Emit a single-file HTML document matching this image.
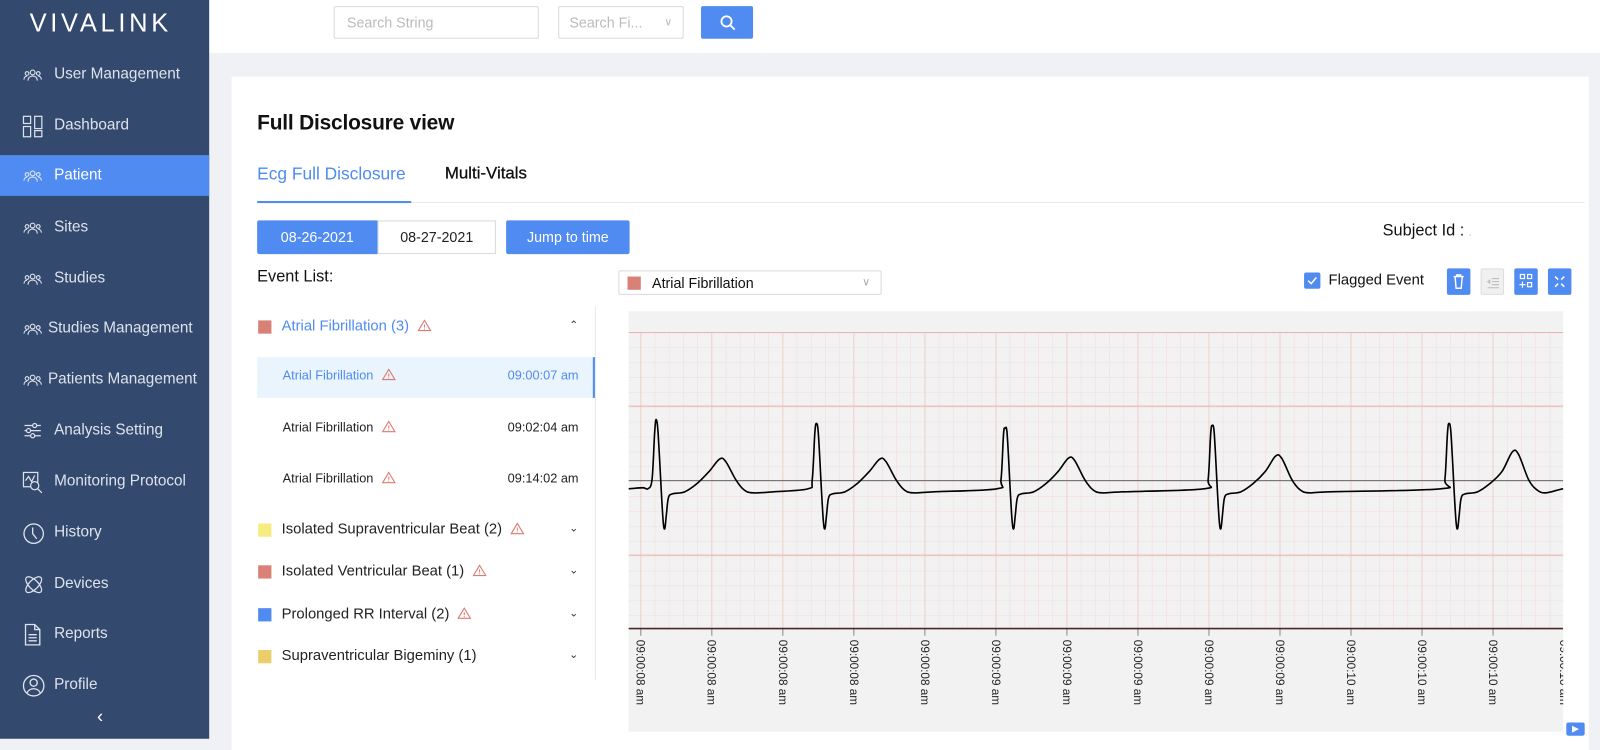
<!DOCTYPE html>
<html><head><meta charset="utf-8"><style>
*{margin:0;padding:0;box-sizing:border-box}
html,body{width:1600px;height:738px;overflow:hidden;background:#f0f1f4;font-family:"Liberation Sans",sans-serif}
#w{position:absolute;left:0;top:0;width:1568px;height:724px;transform:scale(1.0204);transform-origin:0 0}
.a{position:absolute}
#sb{left:0;top:0;width:205px;height:724px;background:#34496e}
.mi{position:absolute;left:0;width:205px;height:40px;color:#dde3ec;font-size:15px;line-height:40px;padding-left:53px}
.mi svg{position:absolute;left:22px;top:10px}
.mi.act{background:#4f8bf0;color:#fff}
.btn{position:absolute;background:#4f8bf0;color:#fff;font-size:14px;text-align:center;border-radius:2px}
.row{position:absolute;left:252px;width:331px;font-size:12.5px;color:#222}
.grp{position:absolute;left:253px;font-size:14.5px;color:#222;width:320px}
.sq{position:absolute;left:0;top:2px;width:13px;height:13px}
.warn{display:inline-block;margin-left:8px;vertical-align:-1px}
.car{position:absolute;right:0;top:0;font-size:11px;color:#333}
.tl{position:absolute;top:628px;font-size:11.5px;color:#222;writing-mode:vertical-rl;white-space:nowrap}
.ib{position:absolute;top:263px;width:23px;height:26px;border-radius:2px;background:#4f8bf0}
</style></head><body><div id="w">
<div class="a" style="left:205px;top:0;width:1363px;height:52px;background:#fff"></div>
<div class="a" style="left:327px;top:6px;width:201px;height:32px;border:1px solid #d9d9d9;border-radius:2px;color:#bbb;font-size:14px;line-height:30px;padding-left:12px">Search String</div>
<div class="a" style="left:547px;top:6px;width:123px;height:32px;border:1px solid #d9d9d9;border-radius:2px;color:#bbb;font-size:14px;line-height:30px;padding-left:10px">Search Fi... <span style="position:absolute;right:10px;font-size:11px">&#8744;</span></div>
<div class="btn" style="left:687px;top:6px;width:51px;height:32px"><svg width="16" height="16" viewBox="0 0 16 16" style="margin-top:8px"><circle cx="7" cy="7" r="5" fill="none" stroke="#fff" stroke-width="1.8"/><path d="M11 11l4 4" stroke="#fff" stroke-width="1.8"/></svg></div>

<div class="a" id="sb">
<div class="a" style="left:29px;top:9px;font-size:25px;color:#fff;letter-spacing:3.6px">VIVALINK</div>
<div id="menu"></div>
<div class="a" style="left:95px;top:692px;color:#fff;font-size:18px">&#8249;</div>
</div>

<div class="a" style="left:227px;top:75px;width:1330px;height:660px;background:#fff"></div>
<div class="a" style="left:252px;top:109px;font-size:20.5px;color:#111;font-weight:bold;letter-spacing:-0.2px">Full Disclosure view</div>
<div class="a" style="left:252px;top:161px;font-size:17px;color:#4f8bf0">Ecg Full Disclosure</div>
<div class="a" style="left:436px;top:161px;font-size:16.5px;color:#111;-webkit-text-stroke:0.3px #111">Multi-Vitals</div>
<div class="a" style="left:252px;top:198px;width:1301px;height:1px;background:#e8e8e8"></div>
<div class="a" style="left:252px;top:197px;width:151px;height:2px;background:#4f8bf0"></div>
<div class="btn" style="left:252px;top:216px;width:118px;height:33px;line-height:33px;border-radius:2px 0 0 2px">08-26-2021</div>
<div class="a" style="left:370px;top:216px;width:116px;height:33px;line-height:31px;border:1px solid #d9d9d9;font-size:14px;text-align:center;color:#222">08-27-2021</div>
<div class="btn" style="left:496px;top:216px;width:121px;height:33px;line-height:33px">Jump to time</div>
<div class="a" style="left:1355px;top:218px;font-size:16px;color:#111">Subject Id : <span style="color:#aaa;font-size:10px">.</span></div>
<div class="a" style="left:252px;top:263px;font-size:16px;color:#111">Event List:</div>

<div class="a" style="left:606px;top:265px;width:258px;height:24px;border:1px solid #d9d9d9;border-radius:2px"><div class="a" style="left:8px;top:5px;width:13px;height:13px;background:#d98077"></div><div class="a" style="left:32px;top:3px;font-size:14px;color:#111">Atrial Fibrillation</div><div class="a" style="right:10px;top:4px;font-size:11px;color:#aaa">&#8744;</div></div>
<div class="a" style="left:1278px;top:267px;width:16px;height:16px;background:#4f8bf0;border-radius:2px"><svg width="16" height="16"><path d="M4 8l3 3 5-6" fill="none" stroke="#fff" stroke-width="1.5"/></svg></div>
<div class="a" style="left:1302px;top:267px;font-size:14.5px;color:#111">Flagged Event</div>
<div class="ib" style="left:1418px"><svg width="23" height="26"><path d="M6.5 8h10M9.5 8V6.5h4V8M8 8.5l1 11h5l1-11" fill="none" stroke="#fff" stroke-width="1.4"/></svg></div>
<div class="ib" style="left:1451px;background:#f0f0f0;border:1px solid #ddd"><svg width="23" height="26"><path d="M10 9h7M10 12h7M10 15h7M6 18h11M6 12l2-1.5v3z" fill="none" stroke="#bbb" stroke-width="1"/></svg></div>
<div class="ib" style="left:1484px"><svg width="23" height="26"><path d="M6 6h4v4H6zM13 6h4v4h-4zM13 14h4v4h-4zM8 13v6M5 16h6" fill="none" stroke="#fff" stroke-width="1.2"/></svg></div>
<div class="ib" style="left:1517px"><svg width="23" height="26"><path d="M7 8l3 3M16 8l-3 3M7 18l3-3M16 18l-3-3" fill="none" stroke="#fff" stroke-width="1.5"/></svg></div>

<div class="a" style="left:583px;top:300px;width:1px;height:366px;background:#e8e8e8"></div>
<div id="list"></div>

<div class="a" style="left:616px;top:305px;width:916px;height:412px;background:#f2f2f2;overflow:hidden">
<svg width="916" height="412" id="ch"></svg>
<div id="tls"></div>
</div>
<div class="btn" style="left:1535px;top:708px;width:18px;height:13px;font-size:9px;line-height:13px">&#9654;</div>
</div>
<script>
var ppl='<svg width="20" height="20" viewBox="0 0 20 20" fill="none" stroke="#dde3ec" stroke-width="1.1"><circle cx="10" cy="8" r="2.3"/><circle cx="4.5" cy="9" r="1.8"/><circle cx="15.5" cy="9" r="1.8"/><path d="M5.5 16c0-3 2-4.5 4.5-4.5s4.5 1.5 4.5 4.5M1.5 15c0-2 1.3-3.3 3-3.3M18.5 15c0-2-1.3-3.3-3-3.3"/></svg>';
var ic={dash:'<svg width="20" height="22" viewBox="0 0 20 22" fill="none" stroke="#dde3ec" stroke-width="1.2"><rect x="1" y="1" width="7" height="7"/><rect x="12" y="1" width="7" height="12"/><rect x="1" y="11" width="7" height="10"/><rect x="12" y="15" width="7" height="6"/></svg>',
set:'<svg width="20" height="20" viewBox="0 0 20 20" fill="none" stroke="#dde3ec" stroke-width="1.2"><path d="M2 5h16M2 10h16M2 15h16"/><circle cx="12" cy="5" r="2" fill="#34496e"/><circle cx="6" cy="10" r="2" fill="#34496e"/><circle cx="10" cy="15" r="2" fill="#34496e"/></svg>',
mon:'<svg width="20" height="22" viewBox="0 0 20 22" fill="none" stroke="#dde3ec" stroke-width="1.2"><rect x="1" y="1" width="14" height="14"/><circle cx="12" cy="14" r="4" fill="#34496e"/><path d="M15 17l4 4M3 9l3-4 3 5 3-6"/></svg>',
hist:'<svg width="22" height="22" viewBox="0 0 22 22" fill="none" stroke="#dde3ec" stroke-width="1.3"><circle cx="11" cy="11" r="9.5"/><path d="M10 5v6l4 5"/></svg>',
dev:'<svg width="22" height="22" viewBox="0 0 22 22" fill="none" stroke="#dde3ec" stroke-width="1.2"><ellipse cx="11" cy="11" rx="10" ry="4.5" transform="rotate(45 11 11)"/><ellipse cx="11" cy="11" rx="10" ry="4.5" transform="rotate(-45 11 11)"/></svg>',
rep:'<svg width="20" height="22" viewBox="0 0 20 22" fill="none" stroke="#dde3ec" stroke-width="1.3"><path d="M3 1h9l5 5v15H3zM12 1v5h5M6 11h8M6 14h8M6 17h8"/></svg>',
prof:'<svg width="22" height="22" viewBox="0 0 22 22" fill="none" stroke="#dde3ec" stroke-width="1.3"><circle cx="11" cy="11" r="10"/><circle cx="11" cy="8" r="3.5"/><path d="M4.5 18c1.5-3 4-4 6.5-4s5 1 6.5 4"/></svg>'};
var m=[['User Management',ppl,73],['Dashboard',ic.dash,123],['Patient',ppl,172,1],['Sites',ppl,223],['Studies',ppl,273],['Studies Management',ppl,322,0,47],['Patients Management',ppl,372,0,47],['Analysis Setting',ic.set,422],['Monitoring Protocol',ic.mon,472],['History',ic.hist,522],['Devices',ic.dev,572],['Reports',ic.rep,621],['Profile',ic.prof,671]];
var h='';m.forEach(function(e){h+='<div class="mi'+(e[3]?' act':'')+'" style="top:'+(e[2]-20)+'px;'+(e[4]?'padding-left:'+e[4]+'px':'')+'">'+e[1]+e[0]+'</div>'});
document.getElementById('menu').innerHTML=h;
var W='<svg class="warn" width="14" height="12" viewBox="0 0 14 12"><path d="M7 1L1 11h12z" fill="none" stroke="#e07a70" stroke-width="1.1"/><path d="M7 5v3M7 9v1" stroke="#e07a70"/></svg>';
var L='';
L+='<div class="grp" style="top:312px;left:253px;width:314px"><div class="sq" style="background:#d98077"></div><span style="margin-left:23px;color:#4f8bf0">Atrial Fibrillation (3)</span>'+W+'<span class="car">&#8963;</span></div>';
L+='<div class="a" style="left:252px;top:350px;width:331px;height:40px;background:#eaf4fd;border-right:2px solid #4f8bf0"></div>';
[[369,'09:00:07 am',1],[420,'09:02:04 am'],[470,'09:14:02 am']].forEach(function(r){L+='<div class="row" style="top:'+(r[0]-8)+'px;color:'+(r[2]?'#4f8bf0':'#222')+'"><span style="margin-left:25px">Atrial Fibrillation</span>'+W+'<span style="position:absolute;right:16px">'+r[1]+'</span></div>'});
[[520,'#f7ec80','Isolated Supraventricular Beat (2)',1],[561,'#d98077','Isolated Ventricular Beat (1)',1],[603,'#4f8bf0','Prolonged RR Interval (2)',1],[644,'#ebcd6c','Supraventricular Bigeminy (1)']].forEach(function(g){L+='<div class="grp" style="top:'+(g[0]-9)+'px;width:314px"><div class="sq" style="background:'+g[1]+'"></div><span style="margin-left:23px">'+g[2]+'</span>'+(g[3]?W:'')+'<span class="car">&#8964;</span></div>'});
document.getElementById('list').innerHTML=L;
var s='';var ox=616,oy=305;
for(var y=326;y<=616;y+=14.6)s+='<line x1="0" x2="916" y1="'+(y-oy)+'" y2="'+(y-oy)+'" stroke="#f1e2e0" stroke-width="0.7"/>';
for(var x=628-69.6;x<1540;x+=13.92)s+='<line y1="21" y2="311" x1="'+(x-ox)+'" x2="'+(x-ox)+'" stroke="#f1e2e0" stroke-width="0.7"/>';
for(var i=0;i<14;i++){var x=628+i*69.6-ox;s+='<line y1="21" y2="311" x1="'+x+'" x2="'+x+'" stroke="#eccac5" stroke-width="0.8"/><line y1="311" y2="318" x1="'+x+'" x2="'+x+'" stroke="#888"/>'}
[326,398,544].forEach(function(y){s+='<line x1="0" x2="916" y1="'+(y-oy)+'" y2="'+(y-oy)+'" stroke="#eab1a9" stroke-width="1"/>'});
s+='<line x1="0" x2="916" y1="'+(471-oy)+'" y2="'+(471-oy)+'" stroke="#666" stroke-width="1"/>';
s+='<line x1="0" x2="916" y1="'+(616-oy)+'" y2="'+(616-oy)+'" stroke="#4a2a28" stroke-width="1.5"/>';
var R=[[643,411,450],[800,415,450],[985,420,449],[1188,417,447],[1420,415,443]];
var P=[[616,479],[630,478]];
R.forEach(function(r){var x=r[0];
P.push([x-8,479],[x-4,470],[x-1.5,425],[x,r[1]],[x+2,425],[x+5,480],[x+7,512],[x+8.5,518],[x+10,505],[x+12,488],[x+16,484],[x+28,482],[x+40,474],[x+52,462],[x+62,r[2]],[x+68,r[2]+2],[x+78,470],[x+86,480],[x+95,483],[x+115,482]);
});
P.push([1532,479]);
P.sort(function(a,b){return a[0]-b[0]});
var d='M'+(P[0][0]-ox)+' '+(P[0][1]-oy);
for(var i=0;i<P.length-1;i++){var p0=P[Math.max(0,i-1)],p1=P[i],p2=P[i+1],p3=P[Math.min(P.length-1,i+2)];
var c1x=p1[0]+(p2[0]-p0[0])/6,c1y=p1[1]+(p2[1]-p0[1])/6,c2x=p2[0]-(p3[0]-p1[0])/6,c2y=p2[1]-(p3[1]-p1[1])/6;
d+=' C'+(c1x-ox).toFixed(1)+' '+(c1y-oy).toFixed(1)+' '+(c2x-ox).toFixed(1)+' '+(c2y-oy).toFixed(1)+' '+(p2[0]-ox).toFixed(1)+' '+(p2[1]-oy).toFixed(1);}
s+='<path d="'+d+'" fill="none" stroke="#000" stroke-width="1.6" stroke-linejoin="round"/>';
document.getElementById('ch').innerHTML=s;
var lab=['08','08','08','08','08','09','09','09','09','09','10','10','10','10'];var t='';
lab.forEach(function(l,i){t+='<div class="tl" style="top:322px;left:'+(628+i*69.6-ox-7)+'px">09:00:'+l+' am</div>'});
document.getElementById('tls').innerHTML=t;
</script>
</body></html>
